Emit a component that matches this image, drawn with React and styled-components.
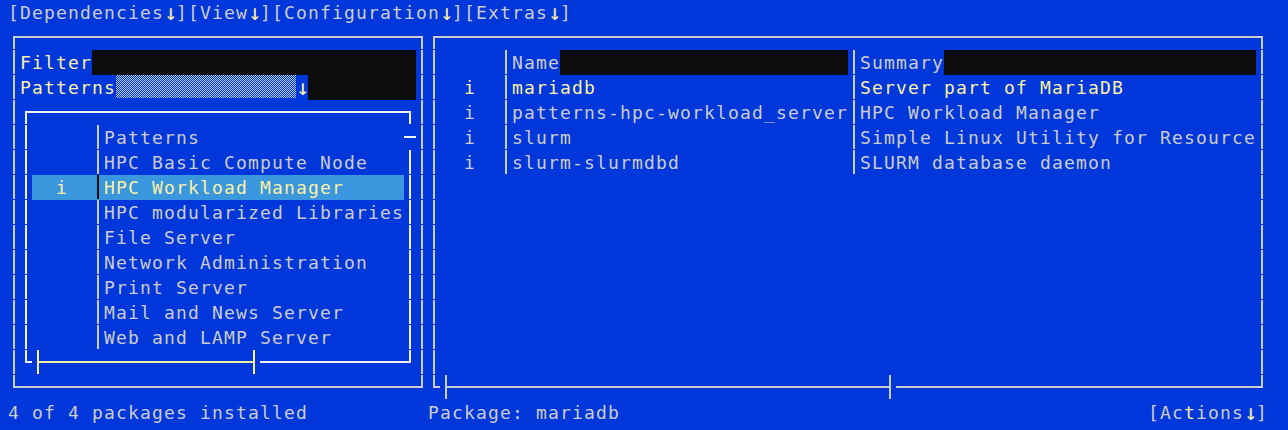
import React from "react";
import styled, { createGlobalStyle } from "styled-components";

// Campbell-ish terminal palette
const BLUE = "#0037da";
const GRAY = "#cccccc";
const WHITE = "#f2f2f2";
const CREAM = "#f9f1a5";
const BLACK = "#0c0c0c";
const CYAN = "#3a96dd";

const CW = 12; // cell width
const CH = 25; // cell height

const GlobalStyle = createGlobalStyle`
	html, body {
		margin: 0;
		background: ${BLUE};
	}
`;

const Screen = styled.div`
	display: grid;
	grid-template-columns: repeat(105, ${CW}px);
	grid-template-rows: repeat(17, ${CH}px);
	width: 1288px;
	height: 430px;
	box-sizing: border-box;
	padding-left: 8px;
	background: ${BLUE};
	color: ${GRAY};
	font-family: "DejaVu Sans Mono", monospace;
	font-size: 18px;
	line-height: ${CH}px;
	letter-spacing: 1.163px;
	white-space: pre;
	overflow: hidden;
`;

const MenuBar = styled.div`
	grid-column: 1 / -1;
	grid-row: 1;
	display: flex;
`;

const Hot = styled.span`
	color: ${CREAM};
`;

// the down arrow of a menu button / combo box, one cell wide
const Arrow = styled.span`
	display: inline-block;
	width: ${CW}px;
	height: ${CH}px;
	text-align: center;
	vertical-align: top;
	font-size: 22px;
	letter-spacing: 0;
	color: ${CREAM};
`;

// a box drawn with line characters: lines sit on the cell centres
const Frame = styled.div`
	position: relative;
	display: grid;
	grid-template-columns: repeat(${(p) => p.$cols}, ${CW}px);
	grid-template-rows: repeat(${(p) => p.$rows}, ${CH}px);
	&::before {
		content: "";
		position: absolute;
		left: 5px;
		right: 5px;
		top: 11px;
		bottom: 12px;
		border-top: 2px solid ${(p) => p.$line};
		border-bottom: ${(p) => (p.$open ? "none" : `2px solid ${p.$line}`)};
		pointer-events: none;
	}
	&::after {
		content: "";
		position: absolute;
		left: 5px;
		right: 5px;
		top: 11px;
		bottom: 12px;
		background-image: linear-gradient(
				to bottom,
				${(p) => p.$line} 24px,
				transparent 24px
			),
			linear-gradient(to bottom, ${(p) => p.$line} 24px, transparent 24px);
		background-size: 2px ${CH}px;
		background-repeat: repeat-y;
		background-position: left 0 top 14px, right 0 top 14px;
		pointer-events: none;
	}
`;

const LeftPane = styled(Frame)`
	grid-column: 1 / span 35;
	grid-row: 2 / span 15;
`;

const RightPane = styled(Frame)`
	grid-column: 36 / span 70;
	grid-row: 2 / span 15;
`;

const FieldRow = styled.div`
	grid-column: 2 / span 33;
	grid-row: ${(p) => p.$row};
	display: flex;
`;

const Label = styled.span`
	color: ${CREAM};
`;

const BlackField = styled.span`
	flex: 1;
	background: ${BLACK};
`;

const Shade = styled.span`
	width: ${15 * CW}px;
	height: 23px;
	background-image: repeating-conic-gradient(
		#b9c8fb 0 25%,
		transparent 0 50%
	);
	background-size: 2px 2px;
`;

const PatternBox = styled(Frame)`
	grid-column: 2 / span 33;
	grid-row: 4 / span 11;
`;

const ListBody = styled.div`
	grid-column: ${(p) => p.$col} / span ${(p) => p.$span};
	grid-row: 2 / span ${(p) => p.$rows};
	display: flex;
	flex-direction: column;
`;

const Row = styled.div`
	display: flex;
	height: ${CH}px;
	background: ${(p) => (p.$selected ? CYAN : "transparent")};
	color: ${(p) => (p.$bright ? CREAM : GRAY)};
`;

const StatusCell = styled.span`
	width: ${5 * CW}px;
	padding-left: ${2 * CW}px;
	box-sizing: border-box;
`;

const Sep = styled.span`
	width: ${CW}px;
	flex: none;
	background: linear-gradient(${(p) => p.$color}, ${(p) => p.$color}) 5px 0 /
		2px 24px no-repeat;
`;

const Cell = styled.span`
	display: flex;
	width: ${(p) => (p.$chars ? `${p.$chars * CW}px` : "auto")};
	flex: ${(p) => (p.$chars ? "none" : "1")};
	overflow: hidden;
`;

const ScrollMark = styled.span`
	grid-column: 33;
	grid-row: 2;
	position: relative;
	z-index: 1;
	background: ${BLUE} linear-gradient(${WHITE}, ${WHITE}) 0 11px / 100% 2px
		no-repeat;
`;

const ScrollRow = styled.div`
	grid-column: 1 / -1;
	grid-row: ${(p) => p.$row};
	display: flex;
`;

const Corner = styled.span`
	width: ${CW}px;
	background: linear-gradient(${(p) => p.$color}, ${(p) => p.$color})
		${(p) => (p.$right ? "0" : "5px")} 11px / 7px 2px no-repeat;
`;

const Thumb = styled.span`
	width: ${(p) => p.$cells * CW}px;
	--c: ${(p) => p.$color};
	background: linear-gradient(var(--c), var(--c)) 6px 11px /
			${(p) => p.$cells * CW - 12}px 2px no-repeat,
		linear-gradient(var(--c), var(--c)) 5px 0 / 2px 24px no-repeat,
		linear-gradient(var(--c), var(--c)) ${(p) => p.$cells * CW - 7}px 0 / 2px
			24px no-repeat;
`;

const Track = styled.span`
	flex: 1;
	background: linear-gradient(${(p) => p.$color}, ${(p) => p.$color}) 0 11px /
		100% 2px no-repeat;
`;

const StatusBar = styled.div`
	grid-column: 1 / -1;
	grid-row: 17;
	display: flex;
`;

const StatusLeft = styled.span`
	width: ${35 * CW}px;
`;

const StatusMid = styled.span`
	flex: 1;
`;

const patterns = [
	{ name: "HPC Basic Compute Node" },
	{ name: "HPC Workload Manager", status: "i", selected: true },
	{ name: "HPC modularized Libraries" },
	{ name: "File Server" },
	{ name: "Network Administration" },
	{ name: "Print Server" },
	{ name: "Mail and News Server" },
	{ name: "Web and LAMP Server" }
];

const packages = [
	{ name: "mariadb", summary: "Server part of MariaDB", bright: true },
	{ name: "patterns-hpc-workload_server", summary: "HPC Workload Manager" },
	{ name: "slurm", summary: "Simple Linux Utility for Resource" },
	{ name: "slurm-slurmdbd", summary: "SLURM database daemon" }
];

const MenuItem = ({ label }) => (
	<span>
		[{label}
		<Arrow>↓</Arrow>]
	</span>
);

const App = () => (
	<>
		<GlobalStyle />
		<Screen>
			<MenuBar>
				<MenuItem label="Dependencies" />
				<MenuItem label="View" />
				<MenuItem label="Configuration" />
				<MenuItem label="Extras" />
			</MenuBar>

			<LeftPane $cols={35} $rows={15} $line={GRAY}>
				<FieldRow $row={2}>
					<Label>Filter</Label>
					<BlackField />
				</FieldRow>
				<FieldRow $row={3}>
					<Label>Patterns</Label>
					<Shade />
					<Arrow>↓</Arrow>
					<BlackField />
				</FieldRow>

				<PatternBox $cols={33} $rows={11} $line={WHITE} $open>
					<ListBody $col={2} $span={31} $rows={9}>
						<Row>
							<StatusCell />
							<Sep $color={GRAY} />
							<Cell>Patterns</Cell>
						</Row>
						{patterns.map((p) => (
							<Row key={p.name} $selected={p.selected} $bright={p.selected}>
								<StatusCell>{p.status}</StatusCell>
								<Sep $color={p.selected ? BLACK : GRAY} />
								<Cell>{p.name}</Cell>
							</Row>
						))}
					</ListBody>
					<ScrollMark />
					<ScrollRow $row={11}>
						<Corner $color={WHITE} />
						<Thumb $cells={19} $color={CREAM} />
						<Track $color={WHITE} />
						<Corner $color={WHITE} $right />
					</ScrollRow>
				</PatternBox>
			</LeftPane>

			<RightPane $cols={70} $rows={15} $line={GRAY} $open>
				<ListBody $col={2} $span={68} $rows={5}>
					<Row>
						<StatusCell />
						<Sep $color={GRAY} />
						<Cell $chars={28}>
							Name
							<BlackField />
						</Cell>
						<Sep $color={GRAY} />
						<Cell>
							Summary
							<BlackField />
						</Cell>
					</Row>
					{packages.map((p) => (
						<Row key={p.name} $bright={p.bright}>
							<StatusCell>i</StatusCell>
							<Sep $color={GRAY} />
							<Cell $chars={28}>{p.name}</Cell>
							<Sep $color={GRAY} />
							<Cell>{p.summary}</Cell>
						</Row>
					))}
				</ListBody>
				<ScrollRow $row={15}>
					<Corner $color={GRAY} />
					<Thumb $cells={38} $color={GRAY} />
					<Track $color={GRAY} />
					<Corner $color={GRAY} $right />
				</ScrollRow>
			</RightPane>

			<StatusBar>
				<StatusLeft>4 of 4 packages installed</StatusLeft>
				<StatusMid>Package: mariadb</StatusMid>
				<span>
					[Ac<Hot>t</Hot>ions<Arrow>↓</Arrow>]
				</span>
			</StatusBar>
		</Screen>
	</>
);

export default App;
